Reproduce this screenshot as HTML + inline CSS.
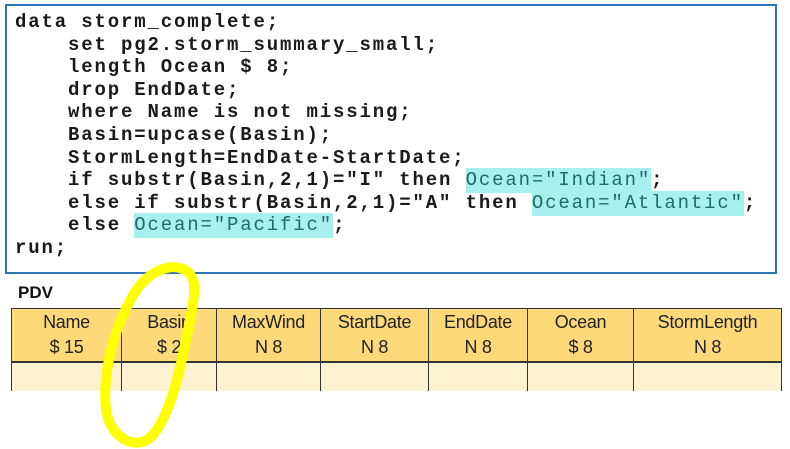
<!DOCTYPE html>
<html><head><style>
body{margin:0;width:790px;height:449px;background:#fff;position:relative;overflow:hidden;font-family:"Liberation Sans",sans-serif}
.box{position:absolute;left:5px;top:4px;width:768px;height:266px;border:2px solid #2e75b6;}
pre{position:absolute;left:8px;top:5px;margin:0;font-family:"Liberation Mono",monospace;font-weight:bold;font-size:19px;line-height:22.6px;color:#1a1a1a;letter-spacing:1.85px}
.h{background:#a8f0ee;color:#1f6b66;font-weight:normal;padding:1px 0 2px}
.pdv{position:absolute;left:18px;top:283px;font-size:17px;font-weight:bold;color:#111}
table{position:absolute;left:11px;top:308px;border-collapse:collapse;table-layout:fixed}
td{border:1px solid #333;padding:0;text-align:center;font-size:18px;color:#222;line-height:25px;letter-spacing:-0.3px}
tr.h1 td{background:#fed97a;height:52px;border-bottom:2px solid #333}
tr.h2 td{background:#fff2d2;height:28px;border-bottom:none}
svg{position:absolute;left:0;top:0}
</style></head><body>
<div class="box"><pre>data storm_complete;
    set pg2.storm_summary_small;
    length Ocean $ 8;
    drop EndDate;
    where Name is not missing;
    Basin=upcase(Basin);
    StormLength=EndDate-StartDate;
    if substr(Basin,2,1)="I" then <span class="h">Ocean="Indian"</span>;
    else if substr(Basin,2,1)="A" then <span class="h">Ocean="Atlantic"</span>;
    else <span class="h">Ocean="Pacific"</span>;
run;</pre></div>
<div class="pdv">PDV</div>
<table>
<colgroup><col style="width:110px"><col style="width:95px"><col style="width:104px"><col style="width:108px"><col style="width:99px"><col style="width:106px"><col style="width:148px"></colgroup>
<tr class="h1"><td>Name<br>$ 15</td><td>Basin<br>$ 2</td><td>MaxWind<br>N 8</td><td>StartDate<br>N 8</td><td>EndDate<br>N 8</td><td>Ocean<br>$ 8</td><td>StormLength<br>N 8</td></tr>
<tr class="h2"><td></td><td></td><td></td><td></td><td></td><td></td><td></td></tr>
</table>
<svg width="790" height="449"><path d="M185 270 C 170 262, 148 272, 135 292 C 115 325, 102 370, 106 410 C 110 438, 135 450, 150 438 C 168 420, 178 380, 186 340 C 194 300, 200 278, 185 270 Z" fill="none" stroke="#ffff00" stroke-width="10"/></svg>
</body></html>
